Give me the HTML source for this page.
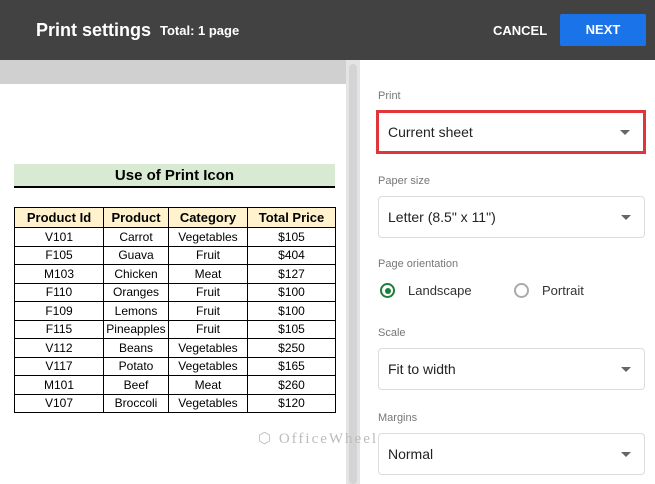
<!DOCTYPE html>
<html><head><style>
*{margin:0;padding:0;box-sizing:border-box}
body{width:655px;height:484px;overflow:hidden;font-family:"Liberation Sans",sans-serif;background:#fff;position:relative}
.hdr{position:absolute;left:0;top:0;width:655px;height:60px;background:#424242;color:#fff}
.abs{position:absolute}
.lbl{position:absolute;left:378px;font-size:11px;color:#777}
.sel{position:absolute;left:378px;width:267px;border:1px solid #dadce0;border-radius:4px;font-size:14px;color:#222;padding-left:9px;display:flex;align-items:center}
.sel .ar{position:absolute;right:13px;top:50%;margin-top:-2px;border-left:5px solid transparent;border-right:5px solid transparent;border-top:5px solid #666}
table{position:absolute;left:14px;top:207px;border-collapse:collapse;font-size:12px}
td{border:1px solid #000;text-align:center;height:18.5px;padding:0}
th{border:1px solid #000;background:#fff2cc;font-size:13px;height:20px;font-weight:bold}
</style></head><body>
<div class="hdr">
<div class="abs" style="left:36px;top:20px;font-size:18px;font-weight:bold">Print settings</div>
<div class="abs" style="left:160px;top:23px;font-size:13px;font-weight:bold">Total: 1 page</div>
<div class="abs" style="left:493px;top:23px;font-size:13px;font-weight:bold">CANCEL</div>
<div class="abs" style="left:560px;top:14px;width:86px;height:32px;background:#1a73e8;border-radius:2px;font-size:13px;font-weight:bold;text-align:center;line-height:32px">NEXT</div>
</div>
<div class="abs" style="left:0;top:60px;width:346px;height:24px;background:#d0d0d0"></div>
<div class="abs" style="left:346px;top:60px;width:14px;height:424px;background:#e4e4e4"></div>
<div class="abs" style="left:349px;top:64px;width:8px;height:420px;background:#d4d4d6;border-radius:4px"></div>
<div class="abs" style="left:0;top:84px;width:346px;height:400px;background:#fff"></div>
<div class="abs" style="left:14px;top:164px;width:321px;height:24px;background:#d9ead3;border-bottom:2px solid #000;text-align:center;font-size:15px;font-weight:bold;line-height:24px">Use of Print Icon</div>
<table>
<tr><th style="width:89px">Product Id</th><th style="width:65px">Product</th><th style="width:79px">Category</th><th style="width:88px">Total Price</th></tr>
<tr><td>V101</td><td>Carrot</td><td>Vegetables</td><td>$105</td></tr>
<tr><td>F105</td><td>Guava</td><td>Fruit</td><td>$404</td></tr>
<tr><td>M103</td><td>Chicken</td><td>Meat</td><td>$127</td></tr>
<tr><td>F110</td><td>Oranges</td><td>Fruit</td><td>$100</td></tr>
<tr><td>F109</td><td>Lemons</td><td>Fruit</td><td>$100</td></tr>
<tr><td>F115</td><td>Pineapples</td><td>Fruit</td><td>$105</td></tr>
<tr><td>V112</td><td>Beans</td><td>Vegetables</td><td>$250</td></tr>
<tr><td>V117</td><td>Potato</td><td>Vegetables</td><td>$165</td></tr>
<tr><td>M101</td><td>Beef</td><td>Meat</td><td>$260</td></tr>
<tr><td>V107</td><td>Broccoli</td><td>Vegetables</td><td>$120</td></tr>
</table>
<div class="lbl" style="top:90px">Print</div>
<div class="sel" style="left:376px;top:110px;width:270px;height:44px;border:3px solid #e0363b;border-radius:0">Current sheet<span class="ar"></span></div>
<div class="lbl" style="top:175px">Paper size</div>
<div class="sel" style="top:196px;height:42px">Letter (8.5" x 11")<span class="ar"></span></div>
<div class="lbl" style="top:258px">Page orientation</div>
<div class="abs" style="left:380px;top:283px;width:15px;height:15px;border:2px solid #188038;border-radius:50%"><div style="margin:2.5px;width:6px;height:6px;background:#188038;border-radius:50%"></div></div>
<div class="abs" style="left:408px;top:283px;font-size:13px;color:#333">Landscape</div>
<div class="abs" style="left:514px;top:283px;width:15px;height:15px;border:2px solid #aaa;border-radius:50%"></div>
<div class="abs" style="left:542px;top:283px;font-size:13px;color:#333">Portrait</div>
<div class="lbl" style="top:327px">Scale</div>
<div class="sel" style="top:348px;height:42px">Fit to width<span class="ar"></span></div>
<div class="lbl" style="top:412px">Margins</div>
<div class="sel" style="top:433px;height:42px">Normal<span class="ar"></span></div>
<div class="abs" style="left:258px;top:429px;font-family:'Liberation Serif',serif;font-size:15px;letter-spacing:2px;color:#bbb">&#x2B21; OfficeWheel</div>
</body></html>
